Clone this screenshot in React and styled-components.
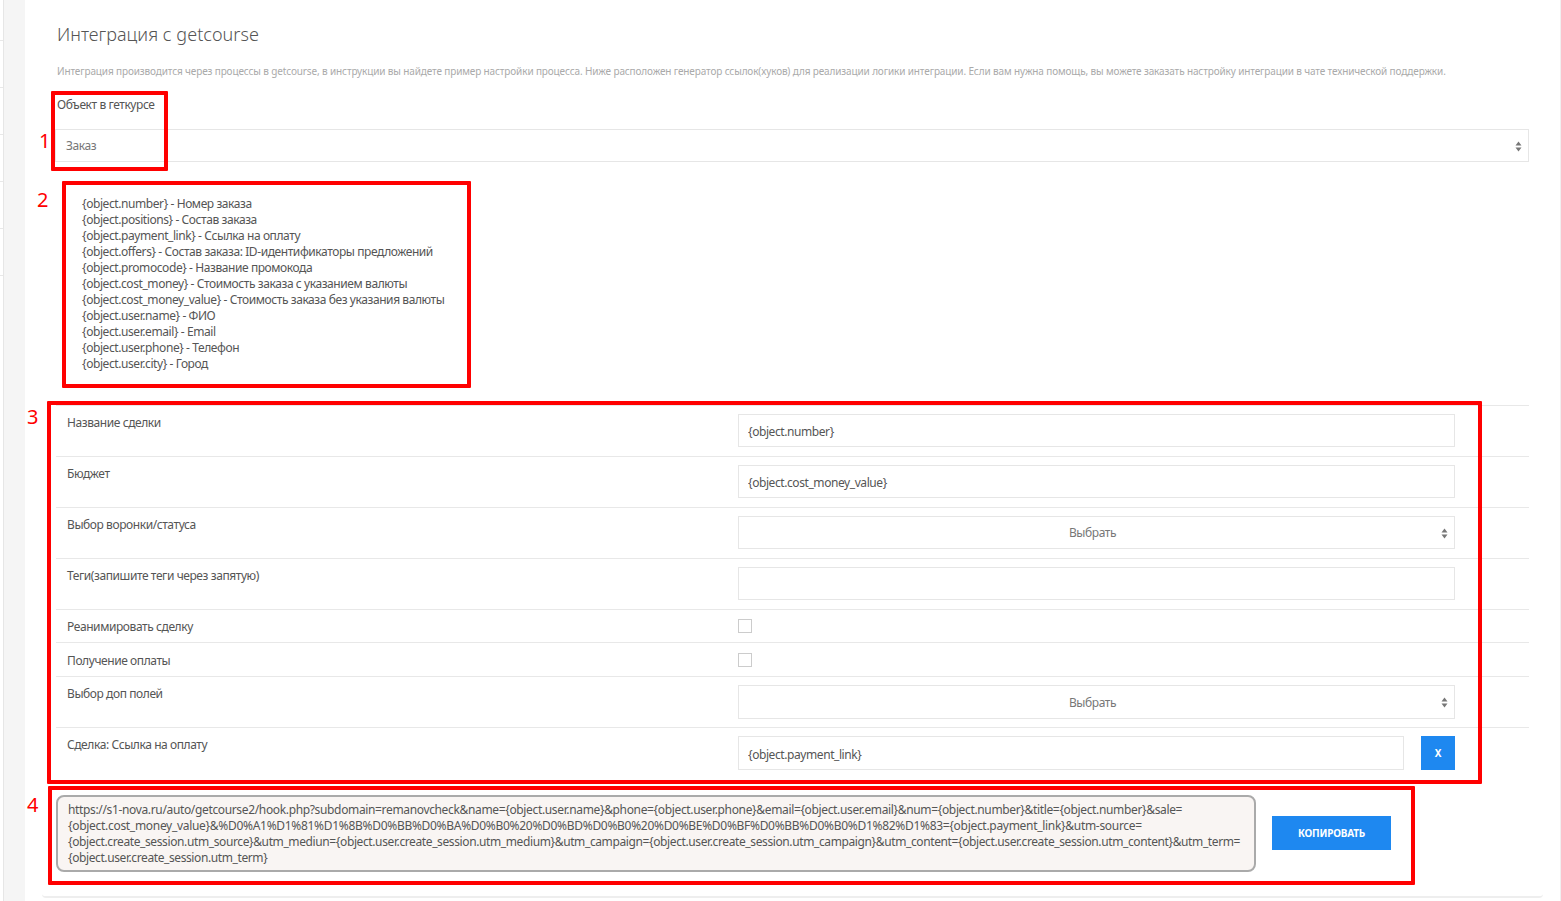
import React from 'react'
import styled, { createGlobalStyle } from 'styled-components'

const GlobalStyle = createGlobalStyle`
  html, body { margin: 0; padding: 0; background: #fff; }
  body { font-family: "Noto Sans", "Open Sans", sans-serif; color: #555; }
`

const Page = styled.div`
  position: relative;
  display: flex;
  width: 1561px;
  height: 901px;
  overflow: hidden;
  background: #fff;
`

const SideStub = styled.div`
  width: 3px;
  flex: none;
  margin-top: -6px;
  border-right: 1px solid #e6e6e6;
`

const StubItem = styled.div`
  height: 46px;
  border-bottom: 1px solid #e8e8e8;
`

const Gutter = styled.div`
  width: 21px;
  flex: none;
  background: #f5f5f5;
`

const Main = styled.div`
  flex: 1;
  padding: 0 0 0 17px;
  border-right: 1px solid #f0f0f0;
`

const Panel = styled.div`
  box-sizing: border-box;
  width: 1501px;
  height: 898px;
  padding: 23px 14px 0 13px;
  border-bottom: 2px solid #eee;
  border-radius: 0 0 4px 4px;
`

const Title = styled.h3`
  margin: 0 0 0 2px;
  font-size: 18px;
  line-height: 22px;
  font-weight: 300;
  letter-spacing: 0.03px;
  color: #555;
`

const Lead = styled.p`
  margin: 19px 0 0 2px;
  font-size: 10px;
  line-height: 14px;
  letter-spacing: -0.13px;
  color: #aaa;
  white-space: nowrap;
`

const FieldLabel = styled.label`
  display: block;
  margin: 19px 0 0 2px;
  font-size: 12px;
  line-height: 16px;
  letter-spacing: -0.42px;
  color: #555;
`

const SelectBox = styled.div`
  position: relative;
  box-sizing: border-box;
  display: flex;
  align-items: center;
  justify-content: ${({ $center }) => ($center ? 'center' : 'flex-start')};
  height: ${({ $tall }) => ($tall ? 34 : 33)}px;
  padding: ${({ $center }) => ($center ? '0 8px 0 0' : '0 10px')};
  border: 1px solid #e6e6e6;
  font-size: 12px;
  letter-spacing: -0.42px;
  color: #777;
  background: #fff;
`

const ObjectSelect = styled(SelectBox)`
  margin-top: 16px;
`

const Arrows = styled.svg`
  position: absolute;
  right: 6px;
  top: 11px;
  width: 7px;
  height: 11px;
`

const HelpList = styled.div`
  margin: 34px 0 0 27px;
  font-size: 12px;
  line-height: 16px;
  letter-spacing: -0.42px;
  color: #555;
`

const HelpLine = styled.div`
  white-space: nowrap;
`

const Table = styled.div`
  margin: 33px 0 0 1px;
`

const Row = styled.div`
  display: grid;
  grid-template-columns: 682px 717px;
  align-items: ${({ $check }) => ($check ? 'center' : 'start')};
  height: ${({ $h }) => $h || 51}px;
  box-sizing: border-box;
  padding: ${({ $check }) => ($check ? '0' : '8px 0 0')};
  border-top: 1px solid #e8e8e8;
`

const RowLabel = styled.div`
  padding: ${({ $check }) => ($check ? '2px' : '1px')} 0 0 11px;
  font-size: 12px;
  line-height: 16px;
  letter-spacing: -0.42px;
  color: #555;
`

const TextInput = styled.input`
  box-sizing: border-box;
  display: block;
  width: 100%;
  height: ${({ $tall }) => ($tall ? 34 : 33)}px;
  padding: 2px 9px 0;
  border: 1px solid #e6e6e6;
  outline: none;
  font-family: inherit;
  font-size: 12px;
  letter-spacing: -0.42px;
  color: #555;
  background: #fff;
`

const CheckBox = styled.span`
  display: block;
  box-sizing: border-box;
  width: 14px;
  height: 14px;
  border: 1px solid #ccc;
  background: #fff;
`

const InputWithButton = styled.div`
  display: flex;
  justify-content: space-between;
`

const ShortInput = styled(TextInput)`
  width: 666px;
`

const BlueButton = styled.button`
  flex: none;
  width: ${({ $w }) => $w}px;
  height: 34px;
  padding: 0;
  border: 0;
  border-radius: 0;
  font-family: inherit;
  font-size: 10px;
  font-weight: 700;
  letter-spacing: -0.2px;
  color: #fff;
  background: #1e88f0;
`

const CopyButton = styled(BlueButton)`
  margin-top: -1px;
`

const OutputRow = styled.div`
  display: flex;
  align-items: center;
  gap: 16px;
  margin: 0 0 0 1px;
  padding-top: 17px;
`

const OutputBox = styled.div`
  box-sizing: border-box;
  width: 1200px;
  height: 77px;
  padding: 5px 10px;
  border: 2px solid #aaa;
  border-radius: 8px;
  font-size: 12px;
  line-height: 16px;
  color: #555;
  background: #f9f5f3;
`

const OutputLine = styled.div`
  white-space: nowrap;
  letter-spacing: ${({ $spacing }) => $spacing}px;
`

const RedFrame = styled.div`
  position: absolute;
  left: ${({ $x }) => $x}px;
  top: ${({ $y }) => $y}px;
  width: ${({ $w }) => $w}px;
  height: ${({ $h }) => $h}px;
  box-sizing: border-box;
  border: 4px solid #f00;
  border-radius: 1px;
  pointer-events: none;
`

const RedNumber = styled.span`
  position: absolute;
  left: ${({ $x }) => $x}px;
  top: ${({ $y }) => $y}px;
  font-family: "Noto Sans", sans-serif;
  font-size: 20px;
  line-height: 24px;
  color: #f00;
`

const helpLines = [
  '{object.number} - Номер заказа',
  '{object.positions} - Состав заказа',
  '{object.payment_link} - Ссылка на оплату',
  '{object.offers} - Состав заказа: ID-идентификаторы предложений',
  '{object.promocode} - Название промокода',
  '{object.cost_money} - Стоимость заказа с указанием валюты',
  '{object.cost_money_value} - Стоимость заказа без указания валюты',
  '{object.user.name} - ФИО',
  '{object.user.email} - Email',
  '{object.user.phone} - Телефон',
  '{object.user.city} - Город',
]

const outputLines = [
  { text: 'https://s1-nova.ru/auto/getcourse2/hook.php?subdomain=remanovcheck&name={object.user.name}&phone={object.user.phone}&email={object.user.email}&num={object.number}&title={object.number}&sale=', spacing: -0.35 },
  { text: '{object.cost_money_value}&%D0%A1%D1%81%D1%8B%D0%BB%D0%BA%D0%B0%20%D0%BD%D0%B0%20%D0%BE%D0%BF%D0%BB%D0%B0%D1%82%D1%83={object.payment_link}&utm-source=', spacing: -0.3 },
  { text: '{object.create_session.utm_source}&utm_mediun={object.user.create_session.utm_medium}&utm_campaign={object.user.create_session.utm_campaign}&utm_content={object.user.create_session.utm_content}&utm_term=', spacing: -0.385 },
  { text: '{object.user.create_session.utm_term}', spacing: -0.4 },
]

const SortArrows = () => (
  <Arrows viewBox="0 0 7 11">
    <path d="M3.5 0.5 L6.5 4.5 H0.5 Z M3.5 10.5 L0.5 6.5 H6.5 Z" fill="#777" />
  </Arrows>
)

const App = () => {
  return (
    <Page>
      <GlobalStyle />
      <SideStub>
        {[0, 1, 2, 3, 4, 5].map((i) => (
          <StubItem key={i} />
        ))}
      </SideStub>
      <Gutter />
      <Main>
        <Panel>
          <Title>Интеграция с getcourse</Title>
          <Lead>
            Интеграция производится через процессы в getcourse, в инструкции вы найдете пример настройки процесса. Ниже расположен генератор ссылок(хуков) для реализации логики интеграции. Если вам нужна помощь, вы можете заказать настройку интеграции в чате технической поддержки.
          </Lead>
          <FieldLabel>Объект в геткурсе</FieldLabel>
          <ObjectSelect>
            Заказ
            <SortArrows />
          </ObjectSelect>
          <HelpList>
            {helpLines.map((line) => (
              <HelpLine key={line}>{line}</HelpLine>
            ))}
          </HelpList>
          <Table>
            <Row>
              <RowLabel>Название сделки</RowLabel>
              <TextInput readOnly value="{object.number}" />
            </Row>
            <Row>
              <RowLabel>Бюджет</RowLabel>
              <TextInput readOnly value="{object.cost_money_value}" />
            </Row>
            <Row>
              <RowLabel>Выбор воронки/статуса</RowLabel>
              <SelectBox $center>
                Выбрать
                <SortArrows />
              </SelectBox>
            </Row>
            <Row>
              <RowLabel>Теги(запишите теги через запятую)</RowLabel>
              <TextInput readOnly value="" />
            </Row>
            <Row $check $h={33}>
              <RowLabel $check>Реанимировать сделку</RowLabel>
              <CheckBox />
            </Row>
            <Row $check $h={34}>
              <RowLabel $check>Получение оплаты</RowLabel>
              <CheckBox />
            </Row>
            <Row>
              <RowLabel>Выбор доп полей</RowLabel>
              <SelectBox $center $tall>
                Выбрать
                <SortArrows />
              </SelectBox>
            </Row>
            <Row>
              <RowLabel>Сделка: Ссылка на оплату</RowLabel>
              <InputWithButton>
                <ShortInput $tall readOnly value="{object.payment_link}" />
                <BlueButton $w={34}>X</BlueButton>
              </InputWithButton>
            </Row>
          </Table>
          <OutputRow>
            <OutputBox>
              {outputLines.map((line) => (
                <OutputLine key={line.text} $spacing={line.spacing}>{line.text}</OutputLine>
              ))}
            </OutputBox>
            <CopyButton $w={119}>КОПИРОВАТЬ</CopyButton>
          </OutputRow>
        </Panel>
      </Main>
      <RedFrame $x={51} $y={91} $w={117} $h={80} />
      <RedFrame $x={62} $y={181} $w={409} $h={207} />
      <RedFrame $x={47} $y={401} $w={1435} $h={383} />
      <RedFrame $x={48} $y={786} $w={1367} $h={99} />
      <RedNumber $x={39} $y={129}>1</RedNumber>
      <RedNumber $x={37} $y={188}>2</RedNumber>
      <RedNumber $x={27} $y={405}>3</RedNumber>
      <RedNumber $x={27} $y={793}>4</RedNumber>
    </Page>
  )
}

export default App
